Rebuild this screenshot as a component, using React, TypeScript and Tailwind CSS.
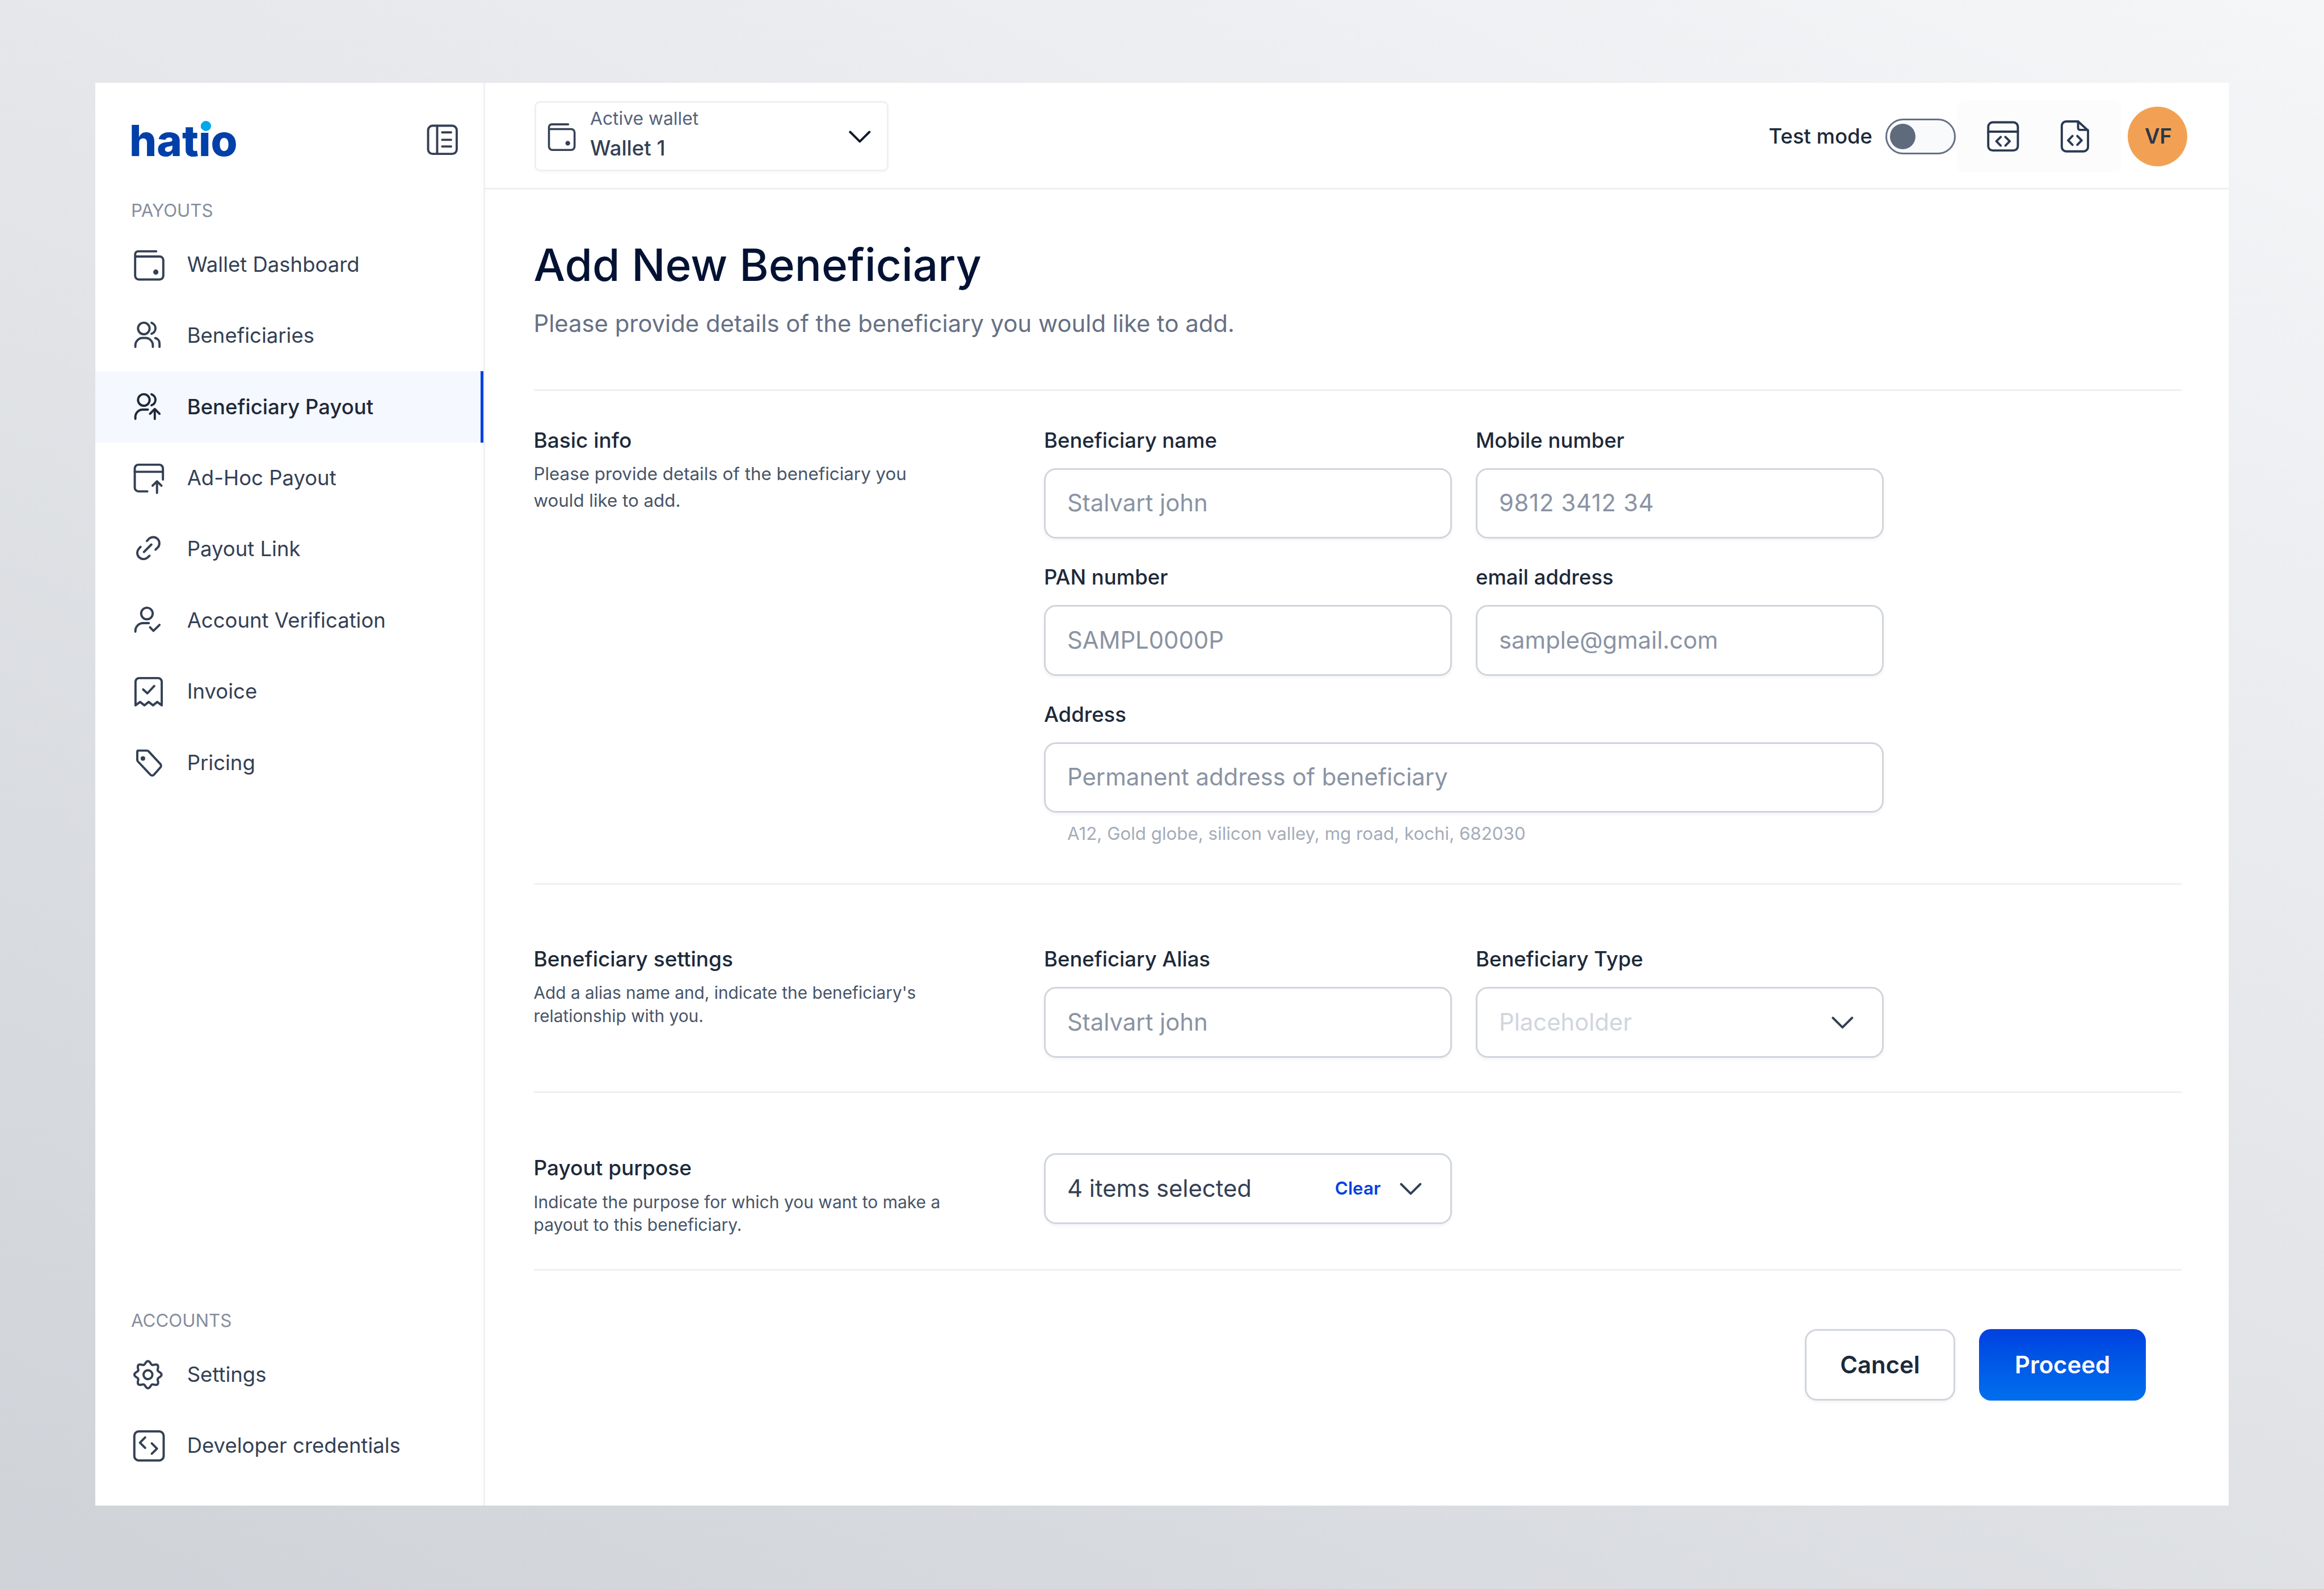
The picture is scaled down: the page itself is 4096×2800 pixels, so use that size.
import type { ReactNode } from 'react';

// icons share one 24 grid, drawn at 62.7px like the 24px icons of the design scaled up
const Icon = ({ children, className = 'text-[#344054]', size = 'w-[62.7px] h-[62.7px]' }: { children: ReactNode; className?: string; size?: string }) => (
  <svg viewBox="0 0 24 24" fill="none" stroke="currentColor" strokeWidth={1.5} strokeLinecap="round" strokeLinejoin="round" className={`${size} shrink-0 ${className}`}>
    {children}
  </svg>
);

const gearPath = (() => {
  const pts: string[] = [];
  for (let i = 0; i < 160; i++) {
    const t = (i / 160) * Math.PI * 2;
    const r = 8.15 + 1 * Math.cos(8 * t);
    pts.push(`${(11.4 + r * Math.sin(t)).toFixed(2)} ${(12 - r * Math.cos(t)).toFixed(2)}`);
  }
  return `M${pts.join('L')}Z`;
})();

const WalletGlyph = () => (
  <>
    <path d="M17 3H4.75a2 2 0 0 0-2 2v14.5a2.5 2.5 0 0 0 2.5 2.5h14a2.5 2.5 0 0 0 2.5-2.5V9a2.5 2.5 0 0 0-2.5-2.5H2.75" />
    <circle cx="16.7" cy="17" r="1" fill="currentColor" />
  </>
);

const navTop = [
  { label: 'Wallet Dashboard', icon: <WalletGlyph /> },
  {
    label: 'Beneficiaries',
    icon: (
      <>
        <circle cx="8.6" cy="7.2" r="3.9" />
        <path d="M13.8 3.4a3.9 3.9 0 0 1 0 7.4" />
        <path d="M2.9 19.6v-1a5 5 0 0 1 5-5h1.8a5 5 0 0 1 5 5v1" />
        <path d="M16.3 13.7a3.6 3.6 0 0 1 2.9 3.5v2.4" />
      </>
    ),
  },
  {
    label: 'Beneficiary Payout',
    active: true,
    icon: (
      <>
        <circle cx="8.6" cy="7.2" r="3.9" />
        <path d="M13.8 3.4a3.9 3.9 0 0 1 0 7.4" />
        <path d="M2.9 19.9v-1.2a5 5 0 0 1 5-5h3.4" />
        <path d="M16 20v-6.6M12.8 16.5l3.2-3.2 3.2 3.2" />
      </>
    ),
  },
  {
    label: 'Ad-Hoc Payout',
    icon: (
      <>
        <path d="M11 21H5a2.5 2.5 0 0 1-2.5-2.5v-13A2.5 2.5 0 0 1 5 3h14a2.5 2.5 0 0 1 2.5 2.5V13" />
        <path d="M2.5 7.8h19" />
        <path d="M17.5 22v-7.5M14.5 17.2l3-3 3 3" />
      </>
    ),
  },
  {
    label: 'Payout Link',
    icon: (
      <>
        <path d="M10.7 6.6l1.6-1.7a4.2 4.2 0 0 1 5.9 5.9l-1.7 1.7" />
        <path d="M6.4 10.6l-1.3 1.4a4.2 4.2 0 0 0 5.9 5.9l1.4-1.3" />
        <path d="M8.7 14l5-5" />
      </>
    ),
  },
  {
    label: 'Account Verification',
    icon: (
      <>
        <circle cx="10.7" cy="7.3" r="3.9" />
        <path d="M2.9 19.5v-.5a5.2 5.2 0 0 1 5.2-5.2H12" />
        <path d="M12.8 16.6l2.3 2.4 4.1-4" />
      </>
    ),
  },
  {
    label: 'Invoice',
    icon: (
      <>
        <path d="M3 21.4V5.5A2.5 2.5 0 0 1 5.5 3h12.7a2.5 2.5 0 0 1 2.5 2.5v15.9l-3-2.3-2.9 2.3-2.9-2.3-2.9 2.3-2.9-2.3z" />
        <path d="M8.2 10.7l2.8 2.6 4.6-4.9" />
      </>
    ),
  },
  {
    label: 'Pricing',
    icon: (
      <>
        <path d="M4.4 3.7h6.2a1.6 1.6 0 0 1 1.2.5l8 8.6a1.6 1.6 0 0 1 0 2.2l-4.4 5a1.6 1.6 0 0 1-2.3 0l-8.5-9a1.6 1.6 0 0 1-.4-1V4.4a.8.8 0 0 1 .7-.7z" />
        <circle cx="8" cy="9" r="0.8" fill="currentColor" />
      </>
    ),
  },
];

const navBottom = [
  {
    label: 'Settings',
    icon: (
      <>
        <path d={gearPath} />
        <circle cx="11.4" cy="12" r="3" />
      </>
    ),
  },
  {
    label: 'Developer credentials',
    icon: (
      <>
        <rect x="2.2" y="2.4" width="19.8" height="19.6" rx="3" />
        <path d="M9.5 6.5L6 10l3.5 3.5M14 10.5l3.5 3.5-3.5 3.5" />
      </>
    ),
  },
];

type NavEntry = { label: string; icon: ReactNode; active?: boolean };

const NavItem = ({ item }: { item: NavEntry }) => (
  <div className={`h-[125.4px] flex items-center gap-[36px] pl-[63px] ${item.active ? 'bg-[#f5f8ff] border-r-[5px] border-[#0040e0]' : ''}`}>
    <Icon className={item.active ? 'text-[#1d2939]' : 'text-[#344054]'}>{item.icon}</Icon>
    <span className={`text-[36.5px] ${item.active ? 'font-medium text-[#1d2939]' : 'text-[#344054]'}`}>{item.label}</span>
  </div>
);

const Chevron = ({ className = 'text-[#344054]' }: { className?: string }) => (
  <Icon className={className}>
    <path d="M5.5 9l6.5 6.5L18.5 9" />
  </Icon>
);

const Field = ({ label, value, className = 'w-[719px]' }: { label: string; value: ReactNode; className?: string }) => (
  <div className={className}>
    <div className="text-[36.5px] leading-[52px] font-medium text-[#1d2939] mb-[23px]">{label}</div>
    <div className="h-[124.5px] rounded-[21px] border-[3.5px] border-[#d0d5dd] bg-white shadow-[0_3px_6px_rgba(16,24,40,0.05)] flex items-center pl-[38px] text-[41.8px] text-[#8a93a3]">
      {value}
    </div>
  </div>
);

const SectionIntro = ({ title, text, textClass }: { title: string; text: string; textClass: string }) => (
  <div className="w-[899.5px] shrink-0">
    <div className="text-[37px] leading-[52px] font-medium text-[#1d2939]">{title}</div>
    <p className={`w-[735px] text-[#475467] ${textClass}`}>{text}</p>
  </div>
);

const App = () => {
  return (
    <div className="w-[4096px] h-[2800px] pt-[146px] pl-[168px] bg-[linear-gradient(206deg,#f5f6f8_0%,#cfd2d7_100%)] [font-family:Inter,sans-serif]">
      <div className="w-[3760px] h-[2507px] bg-white flex">
        <aside className="w-[687px] shrink-0 border-r-[3px] border-[#eef0f3] flex flex-col">
          <div className="h-[201px] shrink-0 flex items-center justify-between pl-[60px] pr-[41.5px]">
            <div className="relative text-[76px] leading-none font-extrabold tracking-[0px] text-[#0040a8]">
              hatio
              <span className="absolute left-[126px] top-[4px] w-[18px] h-[18px] rounded-full bg-[#00a8ec]" />
            </div>
            <Icon>
              <rect x="2.5" y="2.5" width="19.3" height="19" rx="3" />
              <path d="M8.6 2.5v19M12 7h6M12 12h6M12 16.5h6" />
            </Icon>
          </div>
          <div className="pl-[63px] text-[31.3px] leading-[48px] text-[#858d9d] mb-[8.5px]">PAYOUTS</div>
          {navTop.map((item) => (
            <NavItem key={item.label} item={item} />
          ))}
          <div className="mt-auto pl-[63px] text-[31.3px] leading-[48px] text-[#858d9d] mb-[8px]">ACCOUNTS</div>
          {navBottom.map((item) => (
            <NavItem key={item.label} item={item} />
          ))}
          <div className="h-[43px] shrink-0" />
        </aside>

        <div className="flex-1 min-w-0 flex flex-col">
          <header className="h-[188px] shrink-0 border-b-[3px] border-[#eef0f3] pt-[3px] pl-[87px] pr-[73px] flex items-center justify-between">
            <div className="w-[624px] h-[124px] rounded-[10px] border-[3px] border-[#eef0f3] flex items-center pl-[16px] pr-[16px] shadow-[0_2px_4px_rgba(16,24,40,0.03)]">
              <Icon size="w-[57px] h-[57px]">
                <WalletGlyph />
              </Icon>
              <div className="ml-[22px] flex-1 mb-[8px]">
                <div className="text-[31.8px] leading-[46px] text-[#56637a]">Active wallet</div>
                <div className="text-[36.5px] leading-[52px] font-medium text-[#344054] mt-[3px]">Wallet 1</div>
              </div>
              <Chevron className="text-[#101828]" />
            </div>

            <div className="flex items-center">
              <span className="text-[36.5px] font-medium text-[#1d2939] mr-[23px]">Test mode</span>
              <div className="w-[124px] h-[63px] rounded-full border-[3.5px] border-[#667085] bg-[#f9fafb] flex items-center pl-[5px]">
                <span className="w-[45px] h-[45px] rounded-full bg-[#5f6b7d]" />
              </div>
              <div className="w-[290px] h-[126px] ml-[2px] rounded-[12px] bg-[#fcfcfd] pl-[19px] flex items-center">
                <div className="w-[125px] flex justify-center">
                  <Icon className="text-[#2b3a52]">
                    <rect x="2" y="2.5" width="20" height="19" rx="3" />
                    <path d="M2 8.8h20M10.4 12.4l-2.9 2.9 2.9 2.9M13.6 12.4l2.9 2.9-2.9 2.9" />
                  </Icon>
                </div>
                <div className="w-[127px] flex justify-end pr-[31px]">
                  <Icon className="text-[#2b3a52]">
                    <path d="M14 1.9H6a3 3 0 0 0-3 3v14.2a3 3 0 0 0 3 3h11.7a3 3 0 0 0 3-3V8L14 1.9z" />
                    <path d="M14 1.9v4.4a1.3 1.3 0 0 0 1.3 1.3h5.2M10.2 11.7l-2.9 3 2.9 3M13.5 11.7l2.9 3-2.9 3" />
                  </Icon>
                </div>
              </div>
              <div className="w-[105px] h-[105px] ml-[11px] pl-[3px] rounded-full bg-[#f2a154] flex items-center justify-center text-[36.5px] font-semibold text-[#2b3648]">VF</div>
            </div>
          </header>

          <main className="flex-1 pl-[85.5px] pr-[83px] pt-[83px]">
            <h1 className="text-[78.4px] leading-[100px] font-medium text-[#031233]">Add New Beneficiary</h1>
            <p className="text-[41.8px] leading-[60px] text-[#667085] mt-[23px]">Please provide details of the beneficiary you would like to add.</p>

            <section className="mt-[86px] border-t-[3px] border-[#eef0f3] pt-[60.5px] pb-[63px] flex">
              <SectionIntro title="Basic info" text="Please provide details of the beneficiary you would like to add." textClass="text-[31.3px] leading-[47px] mt-[10px]" />
              <div className="w-[1480px]">
                <div className="flex gap-[42px]">
                  <Field label="Beneficiary name" value="Stalvart john" />
                  <Field label="Mobile number" value={<span className="tracking-[0.7px]">9812 3412 34</span>} />
                </div>
                <div className="flex gap-[42px] mt-[42px]">
                  <Field label="PAN number" value="SAMPL0000P" />
                  <Field label="email address" value="sample@gmail.com" />
                </div>
                <Field label="Address" value="Permanent address of beneficiary" className="w-[1480px] mt-[42px]" />
                <div className="pl-[41px] mt-[14px] text-[31.3px] leading-[47px] text-[#a4acb9]">A12, Gold globe, silicon valley, mg road, kochi, 682030</div>
              </div>
            </section>

            <section className="border-t-[3px] border-[#eef0f3] pt-[105px] pb-[59.5px] flex">
              <SectionIntro title="Beneficiary settings" text="Add a alias name and, indicate the beneficiary's relationship with you." textClass="text-[29.8px] leading-[40.5px] mt-[13px]" />
              <div className="flex gap-[42px]">
                <Field label="Beneficiary Alias" value="Stalvart john" />
                <div className="w-[719px]">
                  <div className="text-[36.5px] leading-[52px] font-medium text-[#1d2939] mb-[23px]">Beneficiary Type</div>
                  <div className="h-[124.5px] rounded-[21px] border-[3.5px] border-[#d0d5dd] bg-white shadow-[0_3px_6px_rgba(16,24,40,0.05)] flex items-center justify-between pl-[38px] pr-[38px] text-[41.8px] text-[#d0d5dd]">
                    Placeholder
                    <Chevron />
                  </div>
                </div>
              </div>
            </section>

            <section className="border-t-[3px] border-[#eef0f3] pt-[106px] pb-[58px] flex">
              <SectionIntro title="Payout purpose" text="Indicate the purpose for which you want to make a payout to this beneficiary." textClass="text-[30px] leading-[40px] mt-[14px]" />
              <div className="w-[719px] h-[124.5px] rounded-[21px] border-[3.5px] border-[#d0d5dd] bg-white shadow-[0_3px_6px_rgba(16,24,40,0.05)] flex items-center pl-[38px] pr-[38px]">
                <span className="flex-1 text-[41.8px] text-[#344054]">4 items selected</span>
                <span className="text-[31.3px] font-semibold text-[#0040e0] mr-[22px]">Clear</span>
                <Chevron />
              </div>
            </section>

            <footer className="border-t-[3px] border-[#eef0f3] pt-[103px] pr-[63px] flex justify-end gap-[42px]">
              <button className="w-[265px] h-[126px] rounded-[21px] border-[3.5px] border-[#d0d5dd] bg-white shadow-[0_3px_6px_rgba(16,24,40,0.05)] text-[41.8px] font-semibold text-[#1d2939]">Cancel</button>
              <button className="w-[294px] h-[126px] rounded-[21px] bg-gradient-to-b from-[#0440e0] to-[#006fee] text-[41.8px] font-semibold text-white">Proceed</button>
            </footer>
          </main>
        </div>
      </div>
    </div>
  );
};

export default App;
